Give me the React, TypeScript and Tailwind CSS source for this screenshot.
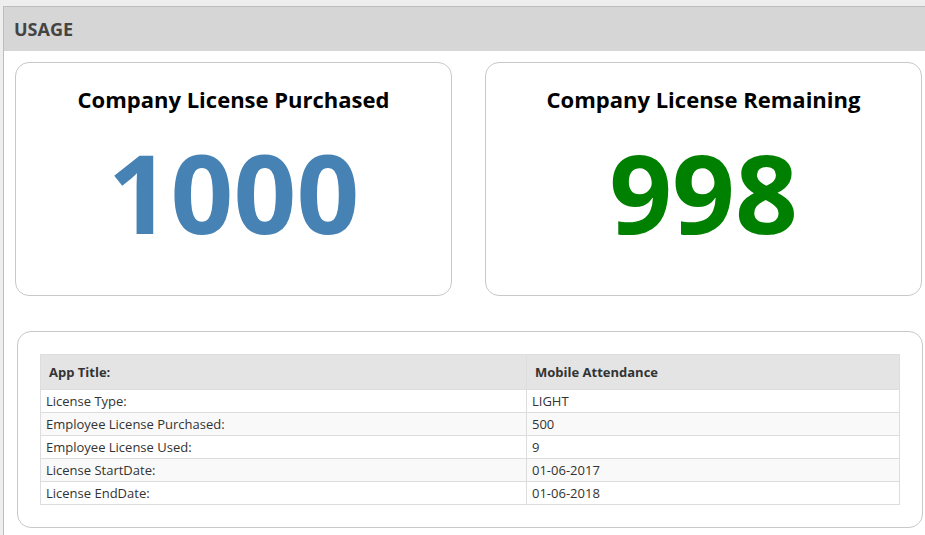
import React from 'react';

const rows = [
  { label: 'License Type:', value: 'LIGHT' },
  { label: 'Employee License Purchased:', value: '500' },
  { label: 'Employee License Used:', value: '9' },
  { label: 'License StartDate:', value: '01-06-2017' },
  { label: 'License EndDate:', value: '01-06-2018' },
];

function StatCard({ title, value, color }: { title: string; value: string; color: string }) {
  return (
    <div className="w-[437px] h-[234px] rounded-[14px] border border-[#c8c8c8] bg-white pt-[21px] text-center">
      <h2 className="text-[22px] leading-[30px] font-bold text-black">{title}</h2>
      <div className={`mt-[22px] text-[110px] leading-none font-bold ${color}`}>{value}</div>
    </div>
  );
}

export default function App() {
  return (
    <div
      className="min-h-screen bg-[#eeeeee] pt-[6px] pl-[3px]"
      style={{ fontFamily: '"Open Sans", "Liberation Sans", sans-serif' }}
    >
      <div className="h-[529px] border-l border-t border-[#bdbdbd] bg-white">
        {/* Header */}
        <div className="h-[44px] bg-[#d6d6d6] px-[10px] flex items-center">
          <span className="text-[18px] font-bold text-[#444] mt-[1px]">USAGE</span>
        </div>

        {/* Stat cards */}
        <div className="flex gap-[33px] pl-[11px] pt-[11px]">
          <StatCard title="Company License Purchased" value="1000" color="text-[#4682b4]" />
          <StatCard title="Company License Remaining" value="998" color="text-[#008000]" />
        </div>

        {/* Details */}
        <div className="ml-[13px] mt-[35px] w-[906px] rounded-[14px] border border-[#c8c8c8] p-[22px]">
          <table className="w-full border-collapse text-[13px] text-[#333]">
            <thead>
              <tr className="h-[35px] bg-[#e4e4e4]">
                <th className="w-[486px] border border-[#dddddd] px-[8px] pt-[1px] text-left font-bold">App Title:</th>
                <th className="border border-[#dddddd] px-[8px] pt-[1px] text-left font-bold">Mobile Attendance</th>
              </tr>
            </thead>
            <tbody>
              {rows.map((r, i) => (
                <tr key={r.label} className={`h-[23px] ${i % 2 === 1 ? 'bg-[#f9f9f9]' : 'bg-white'}`}>
                  <td className="border border-[#dddddd] px-[5px] leading-[20px]">{r.label}</td>
                  <td className="border border-[#dddddd] px-[5px] leading-[20px]">{r.value}</td>
                </tr>
              ))}
            </tbody>
          </table>
        </div>
      </div>
    </div>
  );
}
